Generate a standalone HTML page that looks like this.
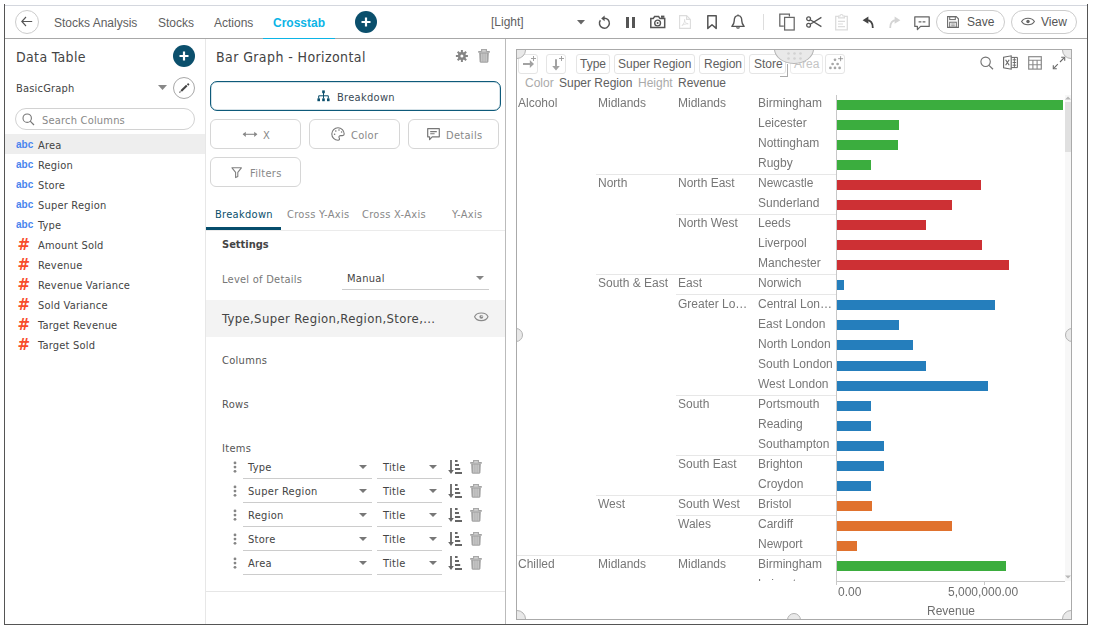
<!DOCTYPE html>
<html lang="en">
<head>
<meta charset="utf-8">
<title>Crosstab - Bar Graph Horizontal</title>
<style>
*{box-sizing:border-box;margin:0;padding:0}
html,body{width:1093px;height:626px;background:#fff;overflow:hidden}
body{position:relative;font-family:"Liberation Sans",Arial,sans-serif;font-size:12px;color:#555}
.abs,.abs *{position:absolute}
.t{position:absolute;white-space:nowrap;line-height:1}
.os{font-family:"DejaVu Sans Condensed","Liberation Sans",sans-serif;letter-spacing:.2px}
svg{position:absolute;overflow:visible}
/* frame */
#frame{position:absolute;left:4px;top:4px;width:1084px;height:621px;border:1px solid #555;border-top:none}
#topline{position:absolute;left:5px;top:5px;width:1082px;height:1px;background:#d4d7de}
#hdrline{position:absolute;left:5px;top:38px;width:1082px;height:1px;background:#a8a8a8}
.vline{position:absolute;width:1px;background:#ddd}
.circ{position:absolute;border-radius:50%}
.pill{position:absolute;border:1px solid #ccc;border-radius:12px;height:24px;top:10px;background:#fff}
.btn{position:absolute;border:1px solid #d6d6d6;border-radius:6px;background:#fff}
.row{position:absolute;left:5px;width:200px;height:20px}
.abc{position:absolute;left:11px;top:6px;font:bold 10px "Liberation Sans",sans-serif;color:#4a84ee;line-height:1;letter-spacing:0}
.hash{position:absolute;left:12.5px;top:4px;font:bold 15px "DejaVu Sans","Liberation Sans",sans-serif;letter-spacing:0;color:#f84c2b;line-height:1}
.rl{position:absolute;left:33px;top:6px;font-size:11px;line-height:1;color:#444;white-space:nowrap}
.chip{position:absolute;top:54px;height:20px;border:1px solid #e5e5e5;border-radius:3px;background:#fff}
.ct{position:absolute;font-size:12px;line-height:1;color:#606060;white-space:nowrap}
.bar{position:absolute;left:838px;height:10px}
.g{background:#3bad3e}.r{background:#cd3034}.b{background:#257ebc}.o{background:#e0722e}
.hd{position:absolute;border:1px solid #b2b2b2;border-radius:50%;background:#e9e9e9}
.hl{position:absolute;height:1px;background:#ddd}
</style>
</head>
<body>
<div id="frame"></div>
<div id="topline"></div>
<div id="hdrline"></div>

<!-- HEADER -->
<div id="header">
  <div class="circ" style="left:15px;top:10px;width:24px;height:24px;border:1px solid #ccc"></div>
  <svg style="left:21px;top:16px" width="12" height="12" viewBox="0 0 12 12"><path d="M5 1 L0.8 5.5 L5 10 M0.8 5.5 H11.2" fill="none" stroke="#555" stroke-width="1.1"/></svg>
  <span class="t" style="left:54px;top:17px;font-size:12px;color:#606060">Stocks Analysis</span>
  <span class="t" style="left:158px;top:17px;font-size:12px;color:#606060">Stocks</span>
  <span class="t" style="left:214px;top:17px;font-size:12px;color:#606060">Actions</span>
  <span class="t" style="left:273px;top:17px;font-size:12px;color:#0cb4e6;font-weight:bold">Crosstab</span>
  <div style="position:absolute;left:263px;top:38px;width:72px;height:1px;background:#0cb4e6"></div>
  <div class="circ" style="left:355px;top:11px;width:22px;height:22px;background:#0b4f6c"></div>
  <svg style="left:361px;top:17px" width="10" height="10" viewBox="0 0 10 10"><path d="M5 0.5V9.5M0.5 5H9.5" stroke="#fff" stroke-width="2.2"/></svg>
  <span class="t" style="left:491px;top:16px;font-size:12px;color:#606060">[Light]</span>
  <svg style="left:577px;top:20px" width="8" height="4.5" viewBox="0 0 8 4.5"><path d="M0 0H8L4 4.5Z" fill="#666"/></svg>
  <!-- refresh -->
  <svg style="left:597px;top:15px" width="14" height="14" viewBox="0 0 14 14"><path d="M3.4 5.2 A5 5 0 1 0 7 3.2" fill="none" stroke="#555" stroke-width="1.5"/><path d="M7.6 0.6 L4.2 3.4 L7.6 6.2 Z" fill="#555"/></svg>
  <!-- pause -->
  <div style="position:absolute;left:626px;top:17px;width:3px;height:11px;background:#555"></div>
  <div style="position:absolute;left:632px;top:17px;width:3px;height:11px;background:#555"></div>
  <!-- camera -->
  <svg style="left:650px;top:15px" width="16" height="14" viewBox="0 0 16 14"><path d="M0.8 3.6 H3.2 L4.6 1.6 H8.6 L10 3.6 H14.7 V12.6 H0.8 Z" fill="none" stroke="#555" stroke-width="1.5"/><circle cx="7.6" cy="8" r="2.9" fill="none" stroke="#555" stroke-width="1.4"/><circle cx="7.6" cy="8" r="1" fill="#555"/><rect x="11" y="0.6" width="3.4" height="2.2" fill="#555"/></svg>
  <!-- pdf -->
  <svg style="left:679px;top:15px" width="12" height="14" viewBox="0 0 12 14"><path d="M0.6 0.6 H7.6 L11.4 4.4 V13.4 H0.6 Z M7.6 0.6 V4.4 H11.4" fill="none" stroke="#dcdcdc" stroke-width="1.1"/><path d="M3 10.5 C5 9 6 6 5.6 4.4 C5 6.5 7 8.6 9.2 8.8 C7 8.6 4.6 9.4 3 10.5Z" fill="none" stroke="#dcdcdc" stroke-width="0.9"/></svg>
  <!-- bookmark -->
  <svg style="left:707px;top:15px" width="10" height="15" viewBox="0 0 10 15"><path d="M0.8 0.8 H9.2 V13.4 L5 9.8 L0.8 13.4 Z" fill="none" stroke="#555" stroke-width="1.5" stroke-linejoin="round"/></svg>
  <!-- bell -->
  <svg style="left:731px;top:14px" width="14" height="16" viewBox="0 0 14 16"><path d="M7 1.6 C3.6 1.6 3.2 4.8 3.2 7 C3.2 9.6 2 11 0.9 12.4 H13.1 C12 11 10.8 9.6 10.8 7 C10.8 4.8 10.4 1.6 7 1.6 Z" fill="none" stroke="#555" stroke-width="1.4" stroke-linejoin="round"/><path d="M5.6 13.2 A1.5 1.5 0 0 0 8.4 13.2" fill="none" stroke="#555" stroke-width="1.3"/><path d="M7 0.4V1.6" stroke="#555" stroke-width="1.3"/></svg>
  <!-- separator -->
  <div style="position:absolute;left:763px;top:14px;width:1px;height:16px;background:#ddd"></div>
  <!-- copy -->
  <svg style="left:779px;top:13px" width="16" height="18" viewBox="0 0 16 18"><path d="M10.4 3.4 V1 H0.8 V13 H4.8" fill="none" stroke="#666" stroke-width="1.25"/><rect x="5.6" y="4.4" width="9.6" height="12.6" fill="none" stroke="#666" stroke-width="1.25"/></svg>
  <!-- scissors -->
  <svg style="left:806px;top:16px" width="16" height="12" viewBox="0 0 16 12"><circle cx="2.6" cy="2.8" r="1.9" fill="none" stroke="#555" stroke-width="1.3"/><circle cx="2.6" cy="9.2" r="1.9" fill="none" stroke="#555" stroke-width="1.3"/><path d="M4.2 3.8 L15.4 10.6 M4.2 8.2 L15.4 1.4" stroke="#555" stroke-width="1.3" fill="none"/></svg>
  <!-- paste -->
  <svg style="left:835px;top:13px" width="13" height="18" viewBox="0 0 13 18"><path d="M3.4 3.4 H0.7 V16.8 H12.3 V3.4 H9.6" fill="none" stroke="#dcdcdc" stroke-width="1.3"/><path d="M3.6 4.8 V3 H5 A1.5 1.5 0 0 1 8 3 H9.4 V4.8 Z" fill="none" stroke="#dcdcdc" stroke-width="1.2"/><path d="M3 8.4H10M3 11H8M3 13.6H10" stroke="#dcdcdc" stroke-width="1.1"/></svg>
  <!-- undo -->
  <svg style="left:862px;top:16px" width="13" height="13" viewBox="0 0 13 13"><path d="M0.6 4.2 L6.4 0.6 V7.8 Z" fill="#444"/><path d="M4.6 4.2 C8.6 4.2 10.8 7.4 10.8 12" fill="none" stroke="#444" stroke-width="1.8"/></svg>
  <!-- redo -->
  <svg style="left:888px;top:16px" width="13" height="13" viewBox="0 0 13 13"><path d="M12.4 4.2 L6.6 0.6 V7.8 Z" fill="#d4d4d4"/><path d="M8.4 4.2 C4.4 4.2 2.2 7.4 2.2 12" fill="none" stroke="#d4d4d4" stroke-width="1.8"/></svg>
  <!-- comment -->
  <svg style="left:914px;top:16px" width="16" height="15" viewBox="0 0 16 15"><path d="M0.8 0.8 H15.2 V10.4 H6.6 L3.4 13.6 V10.4 H0.8 Z" fill="none" stroke="#666" stroke-width="1.25" stroke-linejoin="round"/><path d="M4.6 5.8H7.4M8.6 5.8H11.4" stroke="#666" stroke-width="1.3"/></svg>
  <!-- save -->
  <div class="pill" style="left:936px;width:69px"></div>
  <svg style="left:947px;top:16px" width="12" height="12" viewBox="0 0 12 12"><path d="M0.6 0.6 H9.2 L11.4 2.8 V11.4 H0.6 Z" fill="none" stroke="#6a6a6a" stroke-width="1.1"/><rect x="2.7" y="0.7" width="5.6" height="2.9" fill="none" stroke="#6a6a6a" stroke-width="1"/><rect x="2.7" y="6.2" width="6.6" height="5.1" fill="none" stroke="#6a6a6a" stroke-width="1"/><path d="M4.2 8H7.8M4.2 9.8H7.8" stroke="#6a6a6a" stroke-width="0.8"/></svg>
  <span class="t" style="left:967px;top:16px;font-size:12px;color:#555">Save</span>
  <!-- view -->
  <div class="pill" style="left:1011px;width:66px"></div>
  <svg style="left:1021px;top:17px" width="14" height="9" viewBox="0 0 14 9"><path d="M0.6 4.5 C3 0.2 11 0.2 13.4 4.5 C11 8.8 3 8.8 0.6 4.5 Z" fill="none" stroke="#666" stroke-width="1.1"/><circle cx="7" cy="4.5" r="1.7" fill="#666"/></svg>
  <span class="t" style="left:1041px;top:16px;font-size:12px;color:#555">View</span>
</div>

<!-- LEFT PANEL -->
<div id="left" class="os">
  <div class="vline" style="left:205px;top:39px;height:585px;background:#e7e7e7"></div>
  <span class="t" style="left:16px;top:50px;font-size:14px;color:#444;letter-spacing:.35px">Data Table</span>
  <div class="circ" style="left:173px;top:45px;width:22px;height:22px;background:#0b4f6c"></div>
  <svg style="left:179px;top:51px" width="10" height="10" viewBox="0 0 10 10"><path d="M5 0.5V9.5M0.5 5H9.5" stroke="#fff" stroke-width="2.2"/></svg>
  <span class="t" style="left:16px;top:83px;font-size:11px;color:#444">BasicGraph</span>
  <svg style="left:158px;top:85px" width="9" height="5" viewBox="0 0 9 5"><path d="M0 0H9L4.5 5Z" fill="#888"/></svg>
  <div class="circ" style="left:173px;top:77px;width:22px;height:22px;border:1px solid #a8a8a8"></div>
  <svg style="left:179px;top:83px" width="11" height="10" viewBox="0 0 11 10"><path d="M2.2 7.9 L7.8 2.6" stroke="#444" stroke-width="2.1"/><path d="M0.1 9.9 L0.9 7.9 L2.1 9.1 Z" fill="#444"/><path d="M8.6 1.9 L9.8 0.8" stroke="#444" stroke-width="2"/></svg>
  <div style="position:absolute;left:15px;top:108px;width:180px;height:22px;border:1px solid #d2d2d2;border-radius:11px"></div>
  <svg style="left:22px;top:113px" width="13" height="13" viewBox="0 0 13 13"><circle cx="5.2" cy="5.2" r="4.2" fill="none" stroke="#777" stroke-width="1.1"/><path d="M8.2 8.2 L12 12" stroke="#777" stroke-width="1.2"/></svg>
  <span class="t" style="left:42px;top:115px;font-size:11px;color:#888">Search Columns</span>
  <div class="row" style="top:134px;background:#eee"><span class="abc">abc</span><span class="rl">Area</span></div>
  <div class="row" style="top:154px"><span class="abc">abc</span><span class="rl">Region</span></div>
  <div class="row" style="top:174px"><span class="abc">abc</span><span class="rl">Store</span></div>
  <div class="row" style="top:194px"><span class="abc">abc</span><span class="rl">Super Region</span></div>
  <div class="row" style="top:214px"><span class="abc">abc</span><span class="rl">Type</span></div>
  <div class="row" style="top:234px"><span class="hash">#</span><span class="rl">Amount Sold</span></div>
  <div class="row" style="top:254px"><span class="hash">#</span><span class="rl">Revenue</span></div>
  <div class="row" style="top:274px"><span class="hash">#</span><span class="rl">Revenue Variance</span></div>
  <div class="row" style="top:294px"><span class="hash">#</span><span class="rl">Sold Variance</span></div>
  <div class="row" style="top:314px"><span class="hash">#</span><span class="rl">Target Revenue</span></div>
  <div class="row" style="top:334px"><span class="hash">#</span><span class="rl">Target Sold</span></div>
</div>

<!-- MIDDLE PANEL -->
<div id="mid" class="os">
  <div class="vline" style="left:505px;top:39px;height:585px;background:#bbb"></div>
  <span class="t" style="left:216px;top:50px;font-size:14px;color:#444;letter-spacing:.4px">Bar Graph - Horizontal</span>
  <!-- gear -->
  <svg style="left:455px;top:50px" width="13" height="12" viewBox="0 0 13 12"><g fill="#868686"><circle cx="6.9" cy="6" r="4"/><rect x="5.9" y="0" width="2" height="12"/><rect x="5.9" y="0" width="2" height="12" transform="rotate(45 6.9 6)"/><rect x="5.9" y="0" width="2" height="12" transform="rotate(90 6.9 6)"/><rect x="5.9" y="0" width="2" height="12" transform="rotate(135 6.9 6)"/></g><circle cx="6.9" cy="6" r="1.5" fill="#fff"/></svg>
  <!-- trash -->
  <svg style="left:478px;top:49px" width="12" height="14" viewBox="0 0 12 14"><path d="M0.2 2.9 H11.8" fill="none" stroke="#8c8c8c" stroke-width="1.4"/><path d="M3.6 2.6 V0.7 H8.4 V2.6" fill="#ddd" stroke="#a8a8a8" stroke-width="1.2"/><path d="M1.1 3.8 H10.9 L10.4 12.4 Q10.3 13.8 8.9 13.8 H3.1 Q1.7 13.8 1.6 12.4 Z" fill="#a4a4a4"/><path d="M3.9 4.6V12.6M6 4.6V12.6M8.1 4.6V12.6" stroke="#e2e2e2" stroke-width="0.9"/></svg>
  <!-- breakdown btn -->
  <div class="btn" style="left:210px;top:81px;width:291px;height:30px;border:1px solid #0e5a7a;box-shadow:inset 0 0 0 .5px rgba(14,90,122,.35);border-radius:7px"></div>
  <svg style="left:317px;top:90px" width="13" height="12" viewBox="0 0 13 12"><g fill="#0b4f6c"><rect x="5.2" y="0.4" width="2.6" height="2.8"/><rect x="0.4" y="8.4" width="2.6" height="2.8"/><rect x="5.2" y="8.4" width="2.6" height="2.8"/><rect x="10" y="8.4" width="2.6" height="2.8"/></g><path d="M6.5 3V8.6M1.7 8.6V5.8H11.3V8.6" fill="none" stroke="#0b4f6c" stroke-width="1"/></svg>
  <span class="t" style="left:337px;top:92px;font-size:11px;color:#3a4a56;letter-spacing:.3px">Breakdown</span>
  <!-- X -->
  <div class="btn" style="left:210px;top:119px;width:91px;height:30px"></div>
  <svg style="left:242px;top:130px" width="16" height="8" viewBox="0 0 16 8"><path d="M1.5 4.3H14.5" stroke="#888" stroke-width="1.1"/><path d="M3.8 1.7 L0.6 4.3 L3.8 6.9 Z M12.2 1.7 L15.4 4.3 L12.2 6.9 Z" fill="#888"/></svg>
  <span class="t" style="left:263px;top:130px;font-size:11px;color:#888">X</span>
  <!-- Color -->
  <div class="btn" style="left:309px;top:119px;width:91px;height:30px"></div>
  <svg style="left:331px;top:127px" width="14" height="14" viewBox="0 0 14 14"><path d="M7 0.8 A6.2 6.2 0 1 0 7 13.2 C8.6 13.2 8.8 12 8.2 11 C7.4 9.6 8.4 8.6 9.8 8.6 H11.4 C12.6 8.6 13.2 7.8 13.2 7 A6.2 6.2 0 0 0 7 0.8 Z" fill="none" stroke="#777" stroke-width="1.1"/><circle cx="3.6" cy="7.2" r="0.8" fill="#777"/><circle cx="4.8" cy="4" r="0.8" fill="#777"/><circle cx="8" cy="3" r="0.8" fill="#777"/><circle cx="10.6" cy="5" r="0.8" fill="#777"/></svg>
  <span class="t" style="left:351px;top:130px;font-size:11px;color:#888;letter-spacing:.3px">Color</span>
  <!-- Details -->
  <div class="btn" style="left:408px;top:119px;width:91px;height:30px"></div>
  <svg style="left:427px;top:128px" width="13" height="13" viewBox="0 0 13 13"><path d="M0.7 0.7 H12.3 V8.8 H5.2 L2.6 11.6 V8.8 H0.7 Z" fill="none" stroke="#777" stroke-width="1.2" stroke-linejoin="round"/><path d="M3.2 3.6H9.8M3.2 5.8H7.6" stroke="#777" stroke-width="1.1"/></svg>
  <span class="t" style="left:446px;top:130px;font-size:11px;color:#888;letter-spacing:.3px">Details</span>
  <!-- Filters -->
  <div class="btn" style="left:210px;top:157px;width:91px;height:30px"></div>
  <svg style="left:231px;top:167px" width="11" height="11" viewBox="0 0 11 11"><path d="M1 0.8 H10.4 L6.8 5.4 V9.4 L4.6 10.6 V5.4 Z" fill="none" stroke="#808080" stroke-width="1.1" stroke-linejoin="round"/></svg>
  <span class="t" style="left:250px;top:168px;font-size:11px;color:#888;letter-spacing:.3px">Filters</span>
  <!-- tabs -->
  <span class="t" style="left:215px;top:209px;font-size:11px;color:#0b4f6c;letter-spacing:.3px">Breakdown</span>
  <span class="t" style="left:287px;top:209px;font-size:11px;color:#888;letter-spacing:.3px">Cross Y-Axis</span>
  <span class="t" style="left:362px;top:209px;font-size:11px;color:#888;letter-spacing:.3px">Cross X-Axis</span>
  <span class="t" style="left:452px;top:209px;font-size:11px;color:#888;letter-spacing:.3px">Y-Axis</span>
  <div class="hl" style="left:206px;top:230px;width:299px;background:#ebebeb"></div>
  <div style="position:absolute;left:206px;top:227px;width:75px;height:3px;background:#064d6c"></div>
  <!-- settings -->
  <span class="t" style="left:222px;top:239px;font-size:11px;color:#444;font-weight:bold;letter-spacing:0">Settings</span>
  <span class="t" style="left:222px;top:274px;font-size:11px;color:#777;letter-spacing:.25px">Level of Details</span>
  <span class="t" style="left:347px;top:273px;font-size:11px;color:#444;letter-spacing:.3px">Manual</span>
  <svg style="left:476px;top:276px" width="8" height="4" viewBox="0 0 8 4"><path d="M0 0H8L4 4Z" fill="#858585"/></svg>
  <div class="hl" style="left:342px;top:289px;width:147px;background:#ccc"></div>
  <div style="position:absolute;left:206px;top:300px;width:299px;height:37px;background:#f3f3f3"></div>
  <span class="t" style="left:222px;top:312px;font-size:13px;color:#444;letter-spacing:.35px">Type,Super Region,Region,Store,...</span>
  <svg style="left:474px;top:312px" width="15" height="10" viewBox="0 0 15 10"><path d="M0.6 4.8 C2.6 -0.3 12 -0.3 14 4.8 C12 9.9 2.6 9.9 0.6 4.8 Z" fill="none" stroke="#8a8a8a" stroke-width="1.1"/><circle cx="7.3" cy="4.8" r="1.9" fill="#8a8a8a"/><circle cx="7.9" cy="4.2" r="0.7" fill="#f3f3f3"/></svg>
  <span class="t" style="left:222px;top:355px;font-size:11px;color:#555;letter-spacing:.3px">Columns</span>
  <span class="t" style="left:222px;top:399px;font-size:11px;color:#555;letter-spacing:.3px">Rows</span>
  <span class="t" style="left:222px;top:443px;font-size:11px;color:#555;letter-spacing:.3px">Items</span>
  <div class="abs" style="left:0;top:455px;width:505px;height:24px">
    <svg style="left:233px;top:5px" width="4" height="14" viewBox="0 0 4 14"><circle cx="2" cy="2.9" r="1.4" fill="#858585"/><circle cx="2" cy="7.1" r="1.4" fill="#858585"/><circle cx="2" cy="11.3" r="1.4" fill="#858585"/></svg>
    <span class="t" style="left:248px;top:7px;font-size:11px;color:#444;letter-spacing:.3px">Type</span>
    <svg style="left:359px;top:10px" width="8" height="4" viewBox="0 0 8 4"><path d="M0 0H8L4 4Z" fill="#777"/></svg>
    <div class="hl" style="left:243px;top:23px;width:129px;background:#ccc"></div>
    <span class="t" style="left:383px;top:7px;font-size:11px;color:#444;letter-spacing:.3px">Title</span>
    <svg style="left:429px;top:10px" width="8" height="4" viewBox="0 0 8 4"><path d="M0 0H8L4 4Z" fill="#777"/></svg>
    <div class="hl" style="left:377px;top:23px;width:65px;background:#ccc"></div>
    <svg style="left:448px;top:5px" width="14" height="14" viewBox="0 0 14 14"><path d="M3 0V11.5" stroke="#666" stroke-width="1.8"/><path d="M0.2 10 L3 14 L5.8 10 Z" fill="#666"/><path d="M7 1H9.6M7 5H11M7 9H12.2M7 13H14" stroke="#666" stroke-width="1.9"/></svg>
    <svg style="left:470px;top:5px" width="12" height="14" viewBox="0 0 12 14"><path d="M0.2 2.9 H11.8" fill="none" stroke="#8c8c8c" stroke-width="1.4"/><path d="M3.6 2.6 V0.7 H8.4 V2.6" fill="#ddd" stroke="#a8a8a8" stroke-width="1.2"/><path d="M1.1 3.8 H10.9 L10.4 12.4 Q10.3 13.8 8.9 13.8 H3.1 Q1.7 13.8 1.6 12.4 Z" fill="#a4a4a4"/><path d="M3.9 4.6V12.6M6 4.6V12.6M8.1 4.6V12.6" stroke="#e2e2e2" stroke-width="0.9"/></svg>
  </div>
  <div class="abs" style="left:0;top:479px;width:505px;height:24px">
    <svg style="left:233px;top:5px" width="4" height="14" viewBox="0 0 4 14"><circle cx="2" cy="2.9" r="1.4" fill="#858585"/><circle cx="2" cy="7.1" r="1.4" fill="#858585"/><circle cx="2" cy="11.3" r="1.4" fill="#858585"/></svg>
    <span class="t" style="left:248px;top:7px;font-size:11px;color:#444;letter-spacing:.3px">Super Region</span>
    <svg style="left:359px;top:10px" width="8" height="4" viewBox="0 0 8 4"><path d="M0 0H8L4 4Z" fill="#777"/></svg>
    <div class="hl" style="left:243px;top:23px;width:129px;background:#ccc"></div>
    <span class="t" style="left:383px;top:7px;font-size:11px;color:#444;letter-spacing:.3px">Title</span>
    <svg style="left:429px;top:10px" width="8" height="4" viewBox="0 0 8 4"><path d="M0 0H8L4 4Z" fill="#777"/></svg>
    <div class="hl" style="left:377px;top:23px;width:65px;background:#ccc"></div>
    <svg style="left:448px;top:5px" width="14" height="14" viewBox="0 0 14 14"><path d="M3 0V11.5" stroke="#666" stroke-width="1.8"/><path d="M0.2 10 L3 14 L5.8 10 Z" fill="#666"/><path d="M7 1H9.6M7 5H11M7 9H12.2M7 13H14" stroke="#666" stroke-width="1.9"/></svg>
    <svg style="left:470px;top:5px" width="12" height="14" viewBox="0 0 12 14"><path d="M0.2 2.9 H11.8" fill="none" stroke="#8c8c8c" stroke-width="1.4"/><path d="M3.6 2.6 V0.7 H8.4 V2.6" fill="#ddd" stroke="#a8a8a8" stroke-width="1.2"/><path d="M1.1 3.8 H10.9 L10.4 12.4 Q10.3 13.8 8.9 13.8 H3.1 Q1.7 13.8 1.6 12.4 Z" fill="#a4a4a4"/><path d="M3.9 4.6V12.6M6 4.6V12.6M8.1 4.6V12.6" stroke="#e2e2e2" stroke-width="0.9"/></svg>
  </div>
  <div class="abs" style="left:0;top:503px;width:505px;height:24px">
    <svg style="left:233px;top:5px" width="4" height="14" viewBox="0 0 4 14"><circle cx="2" cy="2.9" r="1.4" fill="#858585"/><circle cx="2" cy="7.1" r="1.4" fill="#858585"/><circle cx="2" cy="11.3" r="1.4" fill="#858585"/></svg>
    <span class="t" style="left:248px;top:7px;font-size:11px;color:#444;letter-spacing:.3px">Region</span>
    <svg style="left:359px;top:10px" width="8" height="4" viewBox="0 0 8 4"><path d="M0 0H8L4 4Z" fill="#777"/></svg>
    <div class="hl" style="left:243px;top:23px;width:129px;background:#ccc"></div>
    <span class="t" style="left:383px;top:7px;font-size:11px;color:#444;letter-spacing:.3px">Title</span>
    <svg style="left:429px;top:10px" width="8" height="4" viewBox="0 0 8 4"><path d="M0 0H8L4 4Z" fill="#777"/></svg>
    <div class="hl" style="left:377px;top:23px;width:65px;background:#ccc"></div>
    <svg style="left:448px;top:5px" width="14" height="14" viewBox="0 0 14 14"><path d="M3 0V11.5" stroke="#666" stroke-width="1.8"/><path d="M0.2 10 L3 14 L5.8 10 Z" fill="#666"/><path d="M7 1H9.6M7 5H11M7 9H12.2M7 13H14" stroke="#666" stroke-width="1.9"/></svg>
    <svg style="left:470px;top:5px" width="12" height="14" viewBox="0 0 12 14"><path d="M0.2 2.9 H11.8" fill="none" stroke="#8c8c8c" stroke-width="1.4"/><path d="M3.6 2.6 V0.7 H8.4 V2.6" fill="#ddd" stroke="#a8a8a8" stroke-width="1.2"/><path d="M1.1 3.8 H10.9 L10.4 12.4 Q10.3 13.8 8.9 13.8 H3.1 Q1.7 13.8 1.6 12.4 Z" fill="#a4a4a4"/><path d="M3.9 4.6V12.6M6 4.6V12.6M8.1 4.6V12.6" stroke="#e2e2e2" stroke-width="0.9"/></svg>
  </div>
  <div class="abs" style="left:0;top:527px;width:505px;height:24px">
    <svg style="left:233px;top:5px" width="4" height="14" viewBox="0 0 4 14"><circle cx="2" cy="2.9" r="1.4" fill="#858585"/><circle cx="2" cy="7.1" r="1.4" fill="#858585"/><circle cx="2" cy="11.3" r="1.4" fill="#858585"/></svg>
    <span class="t" style="left:248px;top:7px;font-size:11px;color:#444;letter-spacing:.3px">Store</span>
    <svg style="left:359px;top:10px" width="8" height="4" viewBox="0 0 8 4"><path d="M0 0H8L4 4Z" fill="#777"/></svg>
    <div class="hl" style="left:243px;top:23px;width:129px;background:#ccc"></div>
    <span class="t" style="left:383px;top:7px;font-size:11px;color:#444;letter-spacing:.3px">Title</span>
    <svg style="left:429px;top:10px" width="8" height="4" viewBox="0 0 8 4"><path d="M0 0H8L4 4Z" fill="#777"/></svg>
    <div class="hl" style="left:377px;top:23px;width:65px;background:#ccc"></div>
    <svg style="left:448px;top:5px" width="14" height="14" viewBox="0 0 14 14"><path d="M3 0V11.5" stroke="#666" stroke-width="1.8"/><path d="M0.2 10 L3 14 L5.8 10 Z" fill="#666"/><path d="M7 1H9.6M7 5H11M7 9H12.2M7 13H14" stroke="#666" stroke-width="1.9"/></svg>
    <svg style="left:470px;top:5px" width="12" height="14" viewBox="0 0 12 14"><path d="M0.2 2.9 H11.8" fill="none" stroke="#8c8c8c" stroke-width="1.4"/><path d="M3.6 2.6 V0.7 H8.4 V2.6" fill="#ddd" stroke="#a8a8a8" stroke-width="1.2"/><path d="M1.1 3.8 H10.9 L10.4 12.4 Q10.3 13.8 8.9 13.8 H3.1 Q1.7 13.8 1.6 12.4 Z" fill="#a4a4a4"/><path d="M3.9 4.6V12.6M6 4.6V12.6M8.1 4.6V12.6" stroke="#e2e2e2" stroke-width="0.9"/></svg>
  </div>
  <div class="abs" style="left:0;top:551px;width:505px;height:24px">
    <svg style="left:233px;top:5px" width="4" height="14" viewBox="0 0 4 14"><circle cx="2" cy="2.9" r="1.4" fill="#858585"/><circle cx="2" cy="7.1" r="1.4" fill="#858585"/><circle cx="2" cy="11.3" r="1.4" fill="#858585"/></svg>
    <span class="t" style="left:248px;top:7px;font-size:11px;color:#444;letter-spacing:.3px">Area</span>
    <svg style="left:359px;top:10px" width="8" height="4" viewBox="0 0 8 4"><path d="M0 0H8L4 4Z" fill="#777"/></svg>
    <div class="hl" style="left:243px;top:23px;width:129px;background:#ccc"></div>
    <span class="t" style="left:383px;top:7px;font-size:11px;color:#444;letter-spacing:.3px">Title</span>
    <svg style="left:429px;top:10px" width="8" height="4" viewBox="0 0 8 4"><path d="M0 0H8L4 4Z" fill="#777"/></svg>
    <div class="hl" style="left:377px;top:23px;width:65px;background:#ccc"></div>
    <svg style="left:448px;top:5px" width="14" height="14" viewBox="0 0 14 14"><path d="M3 0V11.5" stroke="#666" stroke-width="1.8"/><path d="M0.2 10 L3 14 L5.8 10 Z" fill="#666"/><path d="M7 1H9.6M7 5H11M7 9H12.2M7 13H14" stroke="#666" stroke-width="1.9"/></svg>
    <svg style="left:470px;top:5px" width="12" height="14" viewBox="0 0 12 14"><path d="M0.2 2.9 H11.8" fill="none" stroke="#8c8c8c" stroke-width="1.4"/><path d="M3.6 2.6 V0.7 H8.4 V2.6" fill="#ddd" stroke="#a8a8a8" stroke-width="1.2"/><path d="M1.1 3.8 H10.9 L10.4 12.4 Q10.3 13.8 8.9 13.8 H3.1 Q1.7 13.8 1.6 12.4 Z" fill="#a4a4a4"/><path d="M3.9 4.6V12.6M6 4.6V12.6M8.1 4.6V12.6" stroke="#e2e2e2" stroke-width="0.9"/></svg>
  </div>
  <div class="hl" style="left:206px;top:591px;width:299px;background:#e6e6e6"></div>
</div>

<!-- CHART -->
<div id="chart">
  <div style="position:absolute;left:516px;top:49px;width:556px;height:571px;border:1px solid #aaa;overflow:hidden" id="cpanel">
  </div>
  <!-- toolbar buttons -->
  <div class="chip" style="left:518px;width:20px"></div>
  <svg style="left:518px;top:54px" width="20" height="20" viewBox="0 0 20 20"><path d="M5 10H13" stroke="#a2a2a2" stroke-width="2"/><path d="M11.8 6 L16 10 L11.8 14 Z" fill="#a2a2a2"/><path d="M15.5 2V7M13 4.5H18" stroke="#999" stroke-width="0.9"/></svg>
  <div class="chip" style="left:546px;width:20px"></div>
  <svg style="left:546px;top:54px" width="20" height="20" viewBox="0 0 20 20"><path d="M10 5.2V13" stroke="#a2a2a2" stroke-width="2"/><path d="M6.2 12 L10 16.4 L13.8 12 Z" fill="#a2a2a2"/><path d="M15.5 2V7M13 4.5H18" stroke="#999" stroke-width="0.9"/></svg>
  <div class="chip" style="left:576px;width:34px"></div><span class="ct" style="left:580px;top:58px">Type</span>
  <div class="chip" style="left:614px;width:81px"></div><span class="ct" style="left:618px;top:58px">Super Region</span>
  <div class="chip" style="left:699px;width:46px"></div><span class="ct" style="left:704px;top:58px">Region</span>
  <div class="chip" style="left:749px;width:37px"></div><span class="ct" style="left:754px;top:58px">Store</span>
  <div class="chip" style="left:790px;width:33px;border-color:#ececec"></div><span class="ct" style="left:794px;top:58px;color:#c4c4c4">Area</span>
  <div class="chip" style="left:825px;width:20px"></div>
  <svg style="left:828px;top:56px" width="16" height="15" viewBox="0 0 16 15"><g fill="#a6a6a6"><circle cx="2.4" cy="11.9" r="1.35"/><circle cx="7" cy="11.9" r="1.35"/><circle cx="11.6" cy="11.9" r="1.35"/><circle cx="4.6" cy="8" r="1.35"/><circle cx="9.6" cy="8" r="1.35"/><circle cx="7" cy="3.8" r="1.35"/></g><path d="M12.6 0.2V5.2M10.1 2.7H15.1" stroke="#888" stroke-width="0.8"/></svg>
  <!-- bracket -->
  <div style="position:absolute;left:787px;top:64px;width:1px;height:13px;background:#aaa"></div>
  <div style="position:absolute;left:780px;top:76px;width:8px;height:1px;background:#aaa"></div>
  <!-- top drag handle -->
  <div style="position:absolute;left:774px;top:34px;width:40px;height:30px;border:1px solid #b4b4b4;border-radius:50%;background:#e9e9e9;clip-path:inset(16px 0 0 0)"></div>
  <svg style="left:787px;top:52px" width="15" height="8" viewBox="0 0 15 8"><g fill="#d2d2d2"><circle cx="1.5" cy="1.5" r="1.3"/><circle cx="7.5" cy="1.5" r="1.3"/><circle cx="13.5" cy="1.5" r="1.3"/><circle cx="1.5" cy="6.5" r="1.3"/><circle cx="7.5" cy="6.5" r="1.3"/><circle cx="13.5" cy="6.5" r="1.3"/></g></svg>
  <!-- right icons -->
  <svg style="left:980px;top:56px" width="14" height="14" viewBox="0 0 14 14"><circle cx="5.6" cy="5.8" r="4.7" fill="none" stroke="#727272" stroke-width="1.1"/><path d="M9 9.4 L13 13.2" stroke="#727272" stroke-width="1.2"/></svg>
  <svg style="left:1003px;top:55px" width="15" height="15" viewBox="0 0 15 15"><path d="M8.4 2.4 H14.4 V12.6 H8.4" fill="none" stroke="#666" stroke-width="1"/><path d="M9.6 4.8H13.2M9.6 7.5H13.2M9.6 10.2H13.2M11.4 2.4V12.6" stroke="#666" stroke-width="0.9"/><path d="M0.6 2.2 L8.2 0.8 V14.2 L0.6 12.8 Z" fill="#fff" stroke="#666" stroke-width="1.1"/><path d="M2.6 4.8 L6.2 10.2 M6.2 4.8 L2.6 10.2" stroke="#666" stroke-width="1.1"/></svg>
  <svg style="left:1028px;top:56px" width="14" height="14" viewBox="0 0 14 14"><rect x="0.7" y="0.7" width="12.6" height="12.4" fill="none" stroke="#8a8a8a" stroke-width="1.2"/><path d="M0.7 4.2H13.3M0.7 8.7H13.3M4.9 4.2V13M9.1 4.2V13" stroke="#8a8a8a" stroke-width="1.1"/></svg>
  <svg style="left:1052px;top:56px" width="14" height="14" viewBox="0 0 14 14"><path d="M2.2 11.8 L5.8 8.2 M8 6 L11.8 2.2" stroke="#666" stroke-width="1.1"/><path d="M9.2 1.3 H12.7 V4.8 M4.8 12.7 H1.3 V9.2" fill="none" stroke="#666" stroke-width="1.1"/></svg>
  <!-- row 2 -->
  <span class="ct" style="left:525px;top:77px;color:#aaa">Color</span>
  <span class="ct" style="left:559px;top:77px;color:#606060">Super Region</span>
  <span class="ct" style="left:638px;top:77px;color:#aaa">Height</span>
  <span class="ct" style="left:678px;top:77px;color:#606060">Revenue</span>
  <!-- plot (clipped) -->
  <div style="position:absolute;left:517px;top:95px;width:548px;height:486px;overflow:hidden;will-change:transform" id="plot">
    <span class="ct" style="left:1px;top:2px;color:#777">Alcohol</span>
    <span class="ct" style="left:81px;top:2px;color:#777">Midlands</span>
    <span class="ct" style="left:161px;top:2px;color:#777">Midlands</span>
    <span class="ct" style="left:241px;top:2px;color:#777">Birmingham</span>
    <div class="bar g" style="left:320px;top:5px;width:226px"></div>
    <span class="ct" style="left:241px;top:22px;color:#777">Leicester</span>
    <div class="bar g" style="left:320px;top:25px;width:62px"></div>
    <span class="ct" style="left:241px;top:42px;color:#777">Nottingham</span>
    <div class="bar g" style="left:320px;top:45px;width:61px"></div>
    <span class="ct" style="left:241px;top:62px;color:#777">Rugby</span>
    <div class="bar g" style="left:320px;top:65px;width:34px"></div>
    <span class="ct" style="left:81px;top:82px;color:#777">North</span>
    <span class="ct" style="left:161px;top:82px;color:#777">North East</span>
    <span class="ct" style="left:241px;top:82px;color:#777">Newcastle</span>
    <div class="bar r" style="left:320px;top:85px;width:144px"></div>
    <span class="ct" style="left:241px;top:102px;color:#777">Sunderland</span>
    <div class="bar r" style="left:320px;top:105px;width:115px"></div>
    <span class="ct" style="left:161px;top:122px;color:#777">North West</span>
    <span class="ct" style="left:241px;top:122px;color:#777">Leeds</span>
    <div class="bar r" style="left:320px;top:125px;width:89px"></div>
    <span class="ct" style="left:241px;top:142px;color:#777">Liverpool</span>
    <div class="bar r" style="left:320px;top:145px;width:145px"></div>
    <span class="ct" style="left:241px;top:162px;color:#777">Manchester</span>
    <div class="bar r" style="left:320px;top:165px;width:172px"></div>
    <span class="ct" style="left:81px;top:182px;color:#777">South &amp; East</span>
    <span class="ct" style="left:161px;top:182px;color:#777">East</span>
    <span class="ct" style="left:241px;top:182px;color:#777">Norwich</span>
    <div class="bar b" style="left:320px;top:185px;width:7px"></div>
    <span class="ct" style="left:161px;top:203px;color:#777">Greater Lo…</span>
    <span class="ct" style="left:241px;top:203px;color:#777">Central Lon…</span>
    <div class="bar b" style="left:320px;top:205px;width:158px"></div>
    <span class="ct" style="left:241px;top:223px;color:#777">East London</span>
    <div class="bar b" style="left:320px;top:225px;width:62px"></div>
    <span class="ct" style="left:241px;top:243px;color:#777">North London</span>
    <div class="bar b" style="left:320px;top:245px;width:76px"></div>
    <span class="ct" style="left:241px;top:263px;color:#777">South London</span>
    <div class="bar b" style="left:320px;top:266px;width:89px"></div>
    <span class="ct" style="left:241px;top:283px;color:#777">West London</span>
    <div class="bar b" style="left:320px;top:286px;width:151px"></div>
    <span class="ct" style="left:161px;top:303px;color:#777">South</span>
    <span class="ct" style="left:241px;top:303px;color:#777">Portsmouth</span>
    <div class="bar b" style="left:320px;top:306px;width:34px"></div>
    <span class="ct" style="left:241px;top:323px;color:#777">Reading</span>
    <div class="bar b" style="left:320px;top:326px;width:34px"></div>
    <span class="ct" style="left:241px;top:343px;color:#777">Southampton</span>
    <div class="bar b" style="left:320px;top:346px;width:47px"></div>
    <span class="ct" style="left:161px;top:363px;color:#777">South East</span>
    <span class="ct" style="left:241px;top:363px;color:#777">Brighton</span>
    <div class="bar b" style="left:320px;top:366px;width:47px"></div>
    <span class="ct" style="left:241px;top:383px;color:#777">Croydon</span>
    <div class="bar b" style="left:320px;top:386px;width:34px"></div>
    <span class="ct" style="left:81px;top:403px;color:#777">West</span>
    <span class="ct" style="left:161px;top:403px;color:#777">South West</span>
    <span class="ct" style="left:241px;top:403px;color:#777">Bristol</span>
    <div class="bar o" style="left:320px;top:406px;width:35px"></div>
    <span class="ct" style="left:161px;top:423px;color:#777">Wales</span>
    <span class="ct" style="left:241px;top:423px;color:#777">Cardiff</span>
    <div class="bar o" style="left:320px;top:426px;width:115px"></div>
    <span class="ct" style="left:241px;top:443px;color:#777">Newport</span>
    <div class="bar o" style="left:320px;top:446px;width:20px"></div>
    <span class="ct" style="left:1px;top:463px;color:#777">Chilled</span>
    <span class="ct" style="left:81px;top:463px;color:#777">Midlands</span>
    <span class="ct" style="left:161px;top:463px;color:#777">Midlands</span>
    <span class="ct" style="left:241px;top:463px;color:#777">Birmingham</span>
    <div class="bar g" style="left:320px;top:466px;width:169px"></div>
    <span class="ct" style="left:241px;top:483px;color:#777">Leicester</span>
    <div class="bar g" style="left:320px;top:486px;width:43px"></div>
    <div class="hl" style="left:79px;top:79px;width:241px;background:#e7e7e7"></div>
    <div class="hl" style="left:159px;top:119px;width:161px;background:#e7e7e7"></div>
    <div class="hl" style="left:79px;top:179px;width:241px;background:#e7e7e7"></div>
    <div class="hl" style="left:159px;top:199px;width:161px;background:#e7e7e7"></div>
    <div class="hl" style="left:159px;top:300px;width:161px;background:#e7e7e7"></div>
    <div class="hl" style="left:159px;top:360px;width:161px;background:#e7e7e7"></div>
    <div class="hl" style="left:79px;top:400px;width:241px;background:#e7e7e7"></div>
    <div class="hl" style="left:159px;top:420px;width:161px;background:#e7e7e7"></div>
    <div class="hl" style="left:0px;top:460px;width:320px;background:#e7e7e7"></div>
  </div>
  <!-- axes -->
  <div style="position:absolute;left:836px;top:95px;width:1px;height:490px;background:#c8c8c8"></div>
  <div style="position:absolute;left:836px;top:581px;width:229px;height:1px;background:#c8c8c8"></div>
  <div style="position:absolute;left:984px;top:581px;width:1px;height:4px;background:#c8c8c8"></div>
  <span class="ct" style="left:838px;top:586px;color:#6e6e6e;will-change:transform">0.00</span>
  <span class="ct" style="left:948px;top:586px;color:#6e6e6e;will-change:transform">5,000,000.00</span>
  <span class="ct" style="left:927px;top:605px;color:#6e6e6e;will-change:transform">Revenue</span>
  <!-- scrollbar -->
  <div style="position:absolute;left:1065px;top:95px;width:6px;height:486px;background:#f7f7f7"></div>
  <div style="position:absolute;left:1065px;top:102px;width:6px;height:50px;background:#e0e0e0"></div>
  <svg style="left:1065px;top:96px" width="6" height="4" viewBox="0 0 6 4"><path d="M0 3.5 L3 0.5 L6 3.5 Z" fill="#b8b8b8"/></svg>
  <svg style="left:1065px;top:575px" width="6" height="4" viewBox="0 0 6 4"><path d="M0 0.5 L3 3.5 L6 0.5 Z" fill="#b8b8b8"/></svg>
  <!-- handles -->
  <div class="hd" style="left:508px;top:41px;width:18px;height:18px;clip-path:inset(9px 0 0 9px)"></div>
  <div class="hd" style="left:1062px;top:41px;width:18px;height:18px;clip-path:inset(9px 9px 0 0)"></div>
  <div class="hd" style="left:508px;top:610px;width:18px;height:18px;clip-path:inset(0 0 9px 9px)"></div>
  <div class="hd" style="left:1062px;top:610px;width:18px;height:18px;clip-path:inset(0 9px 9px 0)"></div>
  <div class="hd" style="left:509px;top:328px;width:14px;height:14px;clip-path:inset(0 0 0 8px)"></div>
  <div class="hd" style="left:1065px;top:328px;width:14px;height:14px;clip-path:inset(0 8px 0 0)"></div>
  <div class="hd" style="left:787px;top:613px;width:14px;height:14px;clip-path:inset(0 0 8px 0)"></div>
</div>

</body>
</html>
